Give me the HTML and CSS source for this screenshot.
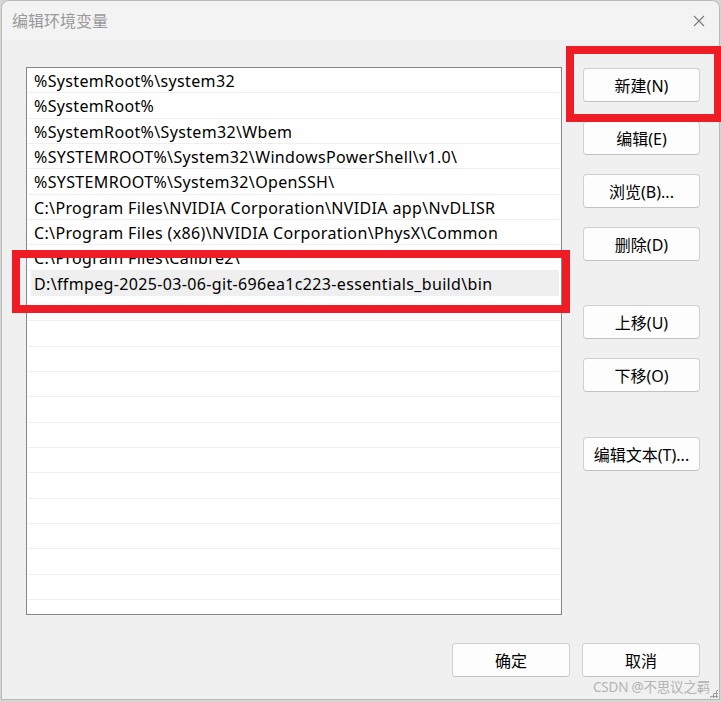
FILE: index.html
```html
<!DOCTYPE html>
<html lang="zh-CN">
  <head>
    <meta charset="UTF-8" />
    <meta name="viewport" content="width=device-width, initial-scale=1.0" />
    <title>编辑环境变量</title>
    <link rel="stylesheet" href="styles.css">
  </head>
  <body>
    <div class="dialog">
      <!-- 标题栏 -->
      <div class="titlebar">
        <span class="title">编辑环境变量</span>
        <span class="close">
          <svg width="12" height="12" viewBox="0 0 12 12">
            <path d="M1 1 L11 11 M11 1 L1 11" stroke="#7a7a7a" stroke-width="1.1" fill="none" />
          </svg>
        </span>
      </div>

      <div class="main">
        <div class="path-list">
          <div class="row">%SystemRoot%\system32</div>
          <div class="row">%SystemRoot%</div>
          <div class="row">%SystemRoot%\System32\Wbem</div>
          <div class="row">%SYSTEMROOT%\System32\WindowsPowerShell\v1.0\</div>
          <div class="row">%SYSTEMROOT%\System32\OpenSSH\</div>
          <div class="row">C:\Program Files\NVIDIA Corporation\NVIDIA app\NvDLISR</div>
          <div class="row">C:\Program Files (x86)\NVIDIA Corporation\PhysX\Common</div>
          <div class="row">C:\Program Files\Calibre2\</div>
          <div class="row selected">D:\ffmpeg-2025-03-06-git-696ea1c223-essentials_build\bin</div>
          <div class="row"></div>
          <div class="row"></div>
          <div class="row"></div>
          <div class="row"></div>
          <div class="row"></div>
          <div class="row"></div>
          <div class="row"></div>
          <div class="row"></div>
          <div class="row"></div>
          <div class="row"></div>
          <div class="row"></div>
          <div class="row"></div>
          <div class="row"></div>
        </div>

        <div class="side-buttons">
          <button class="btn">新建(N)</button>
          <button class="btn">编辑(E)</button>
          <button class="btn">浏览(B)...</button>
          <button class="btn">删除(D)</button>
          <button class="btn group-top">上移(U)</button>
          <button class="btn">下移(O)</button>
          <button class="btn group-top">编辑文本(T)...</button>
        </div>
      </div>

      <div class="footer">
        <button class="btn">确定</button>
        <button class="btn">取消</button>
      </div>

      <div class="watermark">CSDN @不思议之羁</div>
      <div class="grip"></div>
    </div>

    <!-- 红色标注框 -->
    <div class="mark mark-new"></div>
    <div class="mark mark-row"></div>
  </body>
</html>
```

FILE: styles.css
```css
* {
  box-sizing: border-box;
  margin: 0;
  padding: 0;
}

body {
  width: 721px;
  height: 702px;
  background: #d8d6d2;
  overflow: hidden;
  font-family: "Noto Sans", "Noto Sans CJK SC", sans-serif;
  font-size: 15px;
  color: #000;
  position: relative;
}

.dialog {
  position: relative;
  margin-left: 1px;
  width: 719px;
  height: 700px;
  background: #f0f0f0;
  border: 1px solid #b9b9b9;
  border-radius: 8px 8px 0 0;
  display: flex;
  flex-direction: column;
}

.titlebar {
  height: 39px;
  background: #f3f3f3;
  border-radius: 8px 8px 0 0;
  display: flex;
  align-items: center;
  justify-content: space-between;
  padding: 0 14px 0 10px;
}

.title {
  font-family: "Noto Sans CJK SC", sans-serif;
  font-size: 16px;
  color: #9a9a9a;
  margin-top: -2px;
}

.close {
  display: flex;
  margin-top: 1px;
}

.main {
  display: flex;
  padding: 27px 0 0 24px;
  gap: 21px;
}

.path-list {
  width: 536px;
  height: 548px;
  background: #fff;
  border: 1px solid #838790;
  overflow: hidden;
  padding: 0 2px 0 1px;
}

.row {
  height: 25.33px;
  line-height: 26px;
  font-size: 16px;
  letter-spacing: 0.35px;
  border-bottom: 1px solid #efefef;
  padding-left: 6px;
  white-space: nowrap;
}

.row.selected {
  background: #efefef;
  border-left: 3px solid #fff;
  padding-left: 3px;
}

.side-buttons {
  display: flex;
  flex-direction: column;
  gap: 19px;
  padding-top: 1px;
}

.btn {
  width: 117px;
  height: 34px;
  background: #fdfdfd;
  border: 1px solid #d0d0d0;
  border-bottom-color: #c2c2c2;
  border-radius: 4px;
  font-family: "Noto Sans", "Noto Sans CJK SC", sans-serif;
  font-size: 16px;
  color: #000;
}

.btn.group-top {
  margin-top: 25px;
}

.side-buttons .btn:last-child {
  margin-top: 26px;
}

.footer {
  display: flex;
  justify-content: flex-end;
  gap: 12px;
  padding: 28px 19px 0 0;
}

.footer .btn {
  width: 118px;
}

.watermark {
  position: absolute;
  right: 9px;
  bottom: 3px;
  font-family: "Noto Sans", "Noto Sans CJK SC", sans-serif;
  font-size: 13.5px;
  color: #b4b4b4;
  letter-spacing: -0.2px;
}

.grip {
  position: absolute;
  right: 1px;
  bottom: 1px;
  width: 9px;
  height: 9px;
  background: radial-gradient(circle, #9a9a9a 1px, transparent 1.2px) 0 0 / 3px 3px;
  clip-path: polygon(100% 0, 100% 100%, 0 100%);
}

.mark {
  position: absolute;
  border: 8px solid #ee1c25;
}

.mark-new {
  left: 566px;
  top: 46px;
  width: 156px;
  height: 76px;
}

.mark-row {
  left: 12px;
  top: 250px;
  width: 558px;
  height: 63px;
}
```
